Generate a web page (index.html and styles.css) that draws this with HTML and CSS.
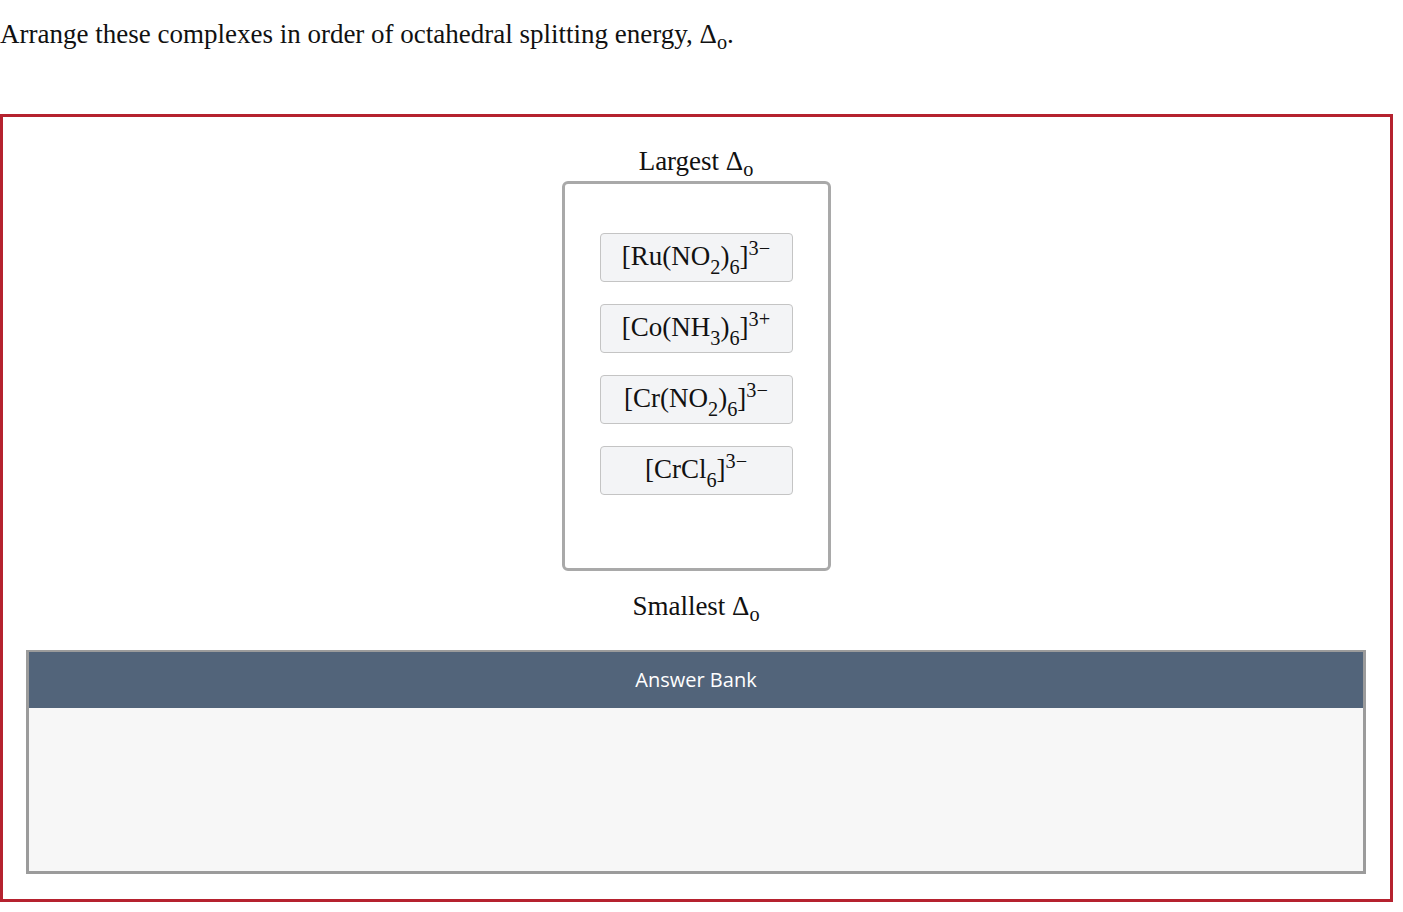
FILE: index.html
```html
<!DOCTYPE html>
<html>
<head>
    <title>Octahedral Splitting Energy</title>
    <link rel="stylesheet" href="styles.css">
</head>
<body>
    <p class="question">Arrange these complexes in order of octahedral splitting energy, Δ<sub>o</sub>.</p>

    <div class="ranking">
        <div class="rank-label">Largest Δ<sub>o</sub></div>

        <div class="drop-zone">
            <div class="chip"><span>[Ru(NO<sub>2</sub>)<sub>6</sub>]<sup>3−</sup></span></div>
            <div class="chip"><span>[Co(NH<sub>3</sub>)<sub>6</sub>]<sup>3+</sup></span></div>
            <div class="chip"><span>[Cr(NO<sub>2</sub>)<sub>6</sub>]<sup>3−</sup></span></div>
            <div class="chip"><span>[CrCl<sub>6</sub>]<sup>3−</sup></span></div>
        </div>

        <div class="rank-label">Smallest Δ<sub>o</sub></div>

        <div class="answer-bank">
            <div class="bank-header">Answer Bank</div>
            <div class="bank-body"></div>
        </div>
    </div>
</body>
</html>
```

FILE: styles.css
```css
body {
    margin: 0;
    font-family: "Liberation Serif", "Times New Roman", serif;
    color: #111;
    width: 1393px;
}

sub, sup {
    font-size: 0.75em;
    line-height: 0;
}

sub {
    vertical-align: -0.3em;
}

sup {
    vertical-align: 0.55em;
}

.chip sub {
    vertical-align: -0.42em;
}

.chip sup {
    vertical-align: 0.5em;
}

.question {
    font-size: 27px;
    margin: 18px 0 0 0;
    line-height: 32px;
}

.ranking {
    margin-top: 64px;
    border: 3px solid #b5222f;
    display: flex;
    flex-direction: column;
    align-items: center;
    padding: 29px 24px 25px 23px;
}

.rank-label {
    font-size: 27px;
    line-height: 30px;
}

.drop-zone {
    margin-top: 5px;
    width: 269px;
    height: 390px;
    box-sizing: border-box;
    border: 3px solid #a9a9a9;
    border-radius: 6px;
    display: flex;
    flex-direction: column;
    align-items: center;
    gap: 22px;
    padding-top: 49px;
}

.chip {
    width: 193px;
    height: 49px;
    box-sizing: border-box;
    background-color: #f3f4f6;
    border: 1px solid #c4c4c4;
    border-radius: 4px;
    font-size: 27px;
    display: flex;
    align-items: center;
    justify-content: center;
    padding-bottom: 2px;
}

.drop-zone + .rank-label {
    margin-top: 20px;
}

.answer-bank {
    margin-top: 29px;
    align-self: stretch;
    border: 3px solid #9b9b9b;
    border-top-width: 2px;
}

.bank-header {
    background-color: #52647a;
    color: #fff;
    font-family: "Open Sans", "Noto Sans", sans-serif;
    font-size: 20px;
    font-weight: 500;
    text-align: center;
    height: 56px;
    line-height: 56px;
}

.bank-body {
    background-color: #f7f7f7;
    height: 163px;
}
```
